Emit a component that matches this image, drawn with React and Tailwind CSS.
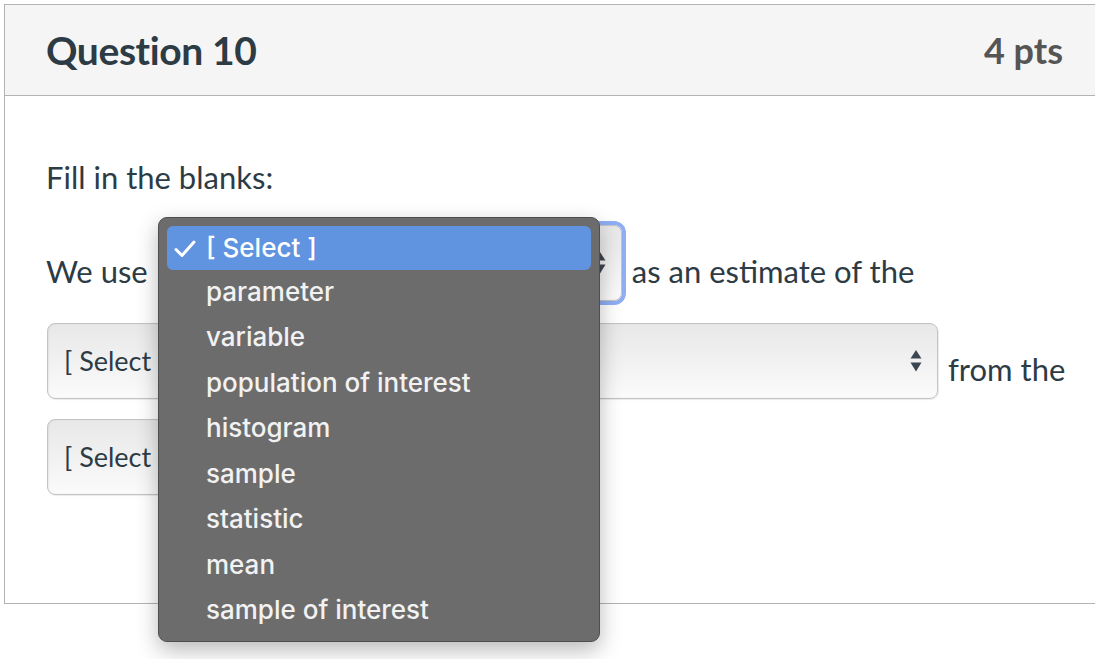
import React from 'react';

const options = [
  '[ Select ]',
  'parameter',
  'variable',
  'population of interest',
  'histogram',
  'sample',
  'statistic',
  'mean',
  'sample of interest',
];

function Arrows() {
  return (
    <svg width="12" height="22" viewBox="0 0 12 22" className="shrink-0">
      <path d="M6 0 L11.5 8.5 L0.5 8.5 Z" fill="#3c4650" />
      <path d="M0.5 12.5 L11.5 12.5 L6 21.5 Z" fill="#3c4650" />
    </svg>
  );
}

function Check() {
  return (
    <svg width="22" height="18" viewBox="0 0 22 18" className="absolute left-[7px] top-[14px]">
      <path d="M2 9.5 L8 15.5 L20 2" fill="none" stroke="white" strokeWidth="3" strokeLinecap="round" strokeLinejoin="round" />
    </svg>
  );
}

function FakeSelect({ label, className = '', focused = false }) {
  return (
    <div
      className={`h-[76px] shrink-0 flex items-center justify-between pl-[16px] pr-[15px] rounded-[8px] border border-[#c4c4c4] bg-gradient-to-b from-[#e8e8e8] via-[#f1f1f1] to-[#fbfbfb] shadow-[inset_1px_0_2px_rgba(0,0,0,0.06),1px_1px_1px_rgba(0,0,0,0.08)] text-[27px] text-[#2d3b45] ${focused ? 'ring-4 ring-[#8eadf3]' : ''} ${className}`}
    >
      <span className="whitespace-nowrap overflow-hidden">{label}</span>
      <Arrows />
    </div>
  );
}

export default function App() {
  return (
    <div className="relative w-full h-[659px] overflow-hidden bg-white" style={{ fontFamily: 'Lato, "Open Sans", sans-serif' }}>
      <div className="pt-[4px] pl-[4px]">
        <div className="w-[1100px] border border-r-0 border-[#b3b3b3]">
          <div className="h-[91px] bg-[#f5f5f5] border-b border-[#b3b3b3] flex items-center justify-between pl-[41px] pr-[41px]">
            <h2 className="text-[39px] font-bold text-[#2d3b45] tracking-[-0.4px]">Question 10</h2>
            <span className="text-[36px] font-bold text-[#555555]">4 pts</span>
          </div>
          <div className="pl-[41px] pt-[63px] pb-[108px] text-[31px] text-[#2d3b45]">
            <p className="leading-[36px]">Fill in the blanks:</p>
            <div className="mt-[30px] flex items-center h-[76px]">
              <span className="pt-[16px] leading-[36px]">We use</span>
              <FakeSelect label="[ Select ]" focused className="ml-[17px] w-[457px]" />
              <span className="ml-[10px] pt-[16px] leading-[36px]">as an estimate of the</span>
            </div>
            <div className="mt-[22px] flex items-center h-[76px]">
              <FakeSelect label="[ Select the term that is the best fit ]" className="ml-[1px] w-[891px]" />
              <span className="ml-[10px] pt-[16px] leading-[36px]">from the</span>
            </div>
            <div className="mt-[20px] flex items-center h-[76px]">
              <FakeSelect label="[ Select ]" className="ml-[1px] w-[500px]" />
            </div>
          </div>
        </div>
      </div>

      <div
        className="absolute left-[158px] top-[217px] w-[442px] h-[425px] rounded-[9px] bg-[#6d6c6d] border border-[#4e4e4e] shadow-[0_8px_22px_rgba(0,0,0,0.28)] pt-[8px] px-[8px]"
        style={{ fontFamily: 'Inter, "Noto Sans", sans-serif' }}
      >
        {options.map((o, i) => (
          <div
            key={o}
            className={`relative flex items-center pl-[39px] text-[26px] font-medium ${i === 0 ? 'h-[44px] mb-[1.5px] pb-[2px] bg-[#6093e0] rounded-[6px] text-white' : 'h-[45.5px] pb-[6px] text-[#f2f2f2]'}`}
          >
            {i === 0 && <Check />}
            <span className="whitespace-nowrap">{o}</span>
          </div>
        ))}
      </div>
    </div>
  );
}
